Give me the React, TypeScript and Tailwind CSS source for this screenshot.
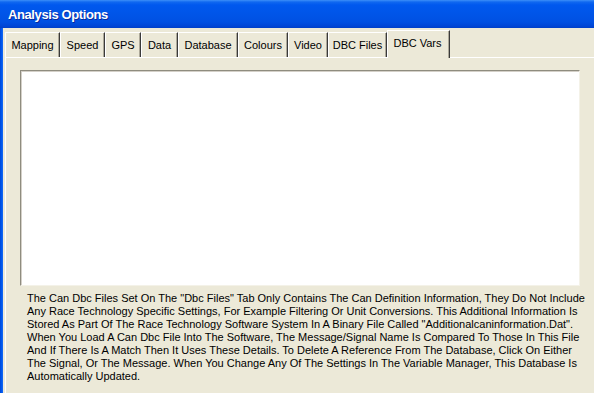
import React from 'react';

const tabs = [
  { label: 'Mapping', w: 'w-[55px]' },
  { label: 'Speed', w: 'w-[45px]' },
  { label: 'GPS', w: 'w-[36px]' },
  { label: 'Data', w: 'w-[37px]' },
  { label: 'Database', w: 'w-[60px]' },
  { label: 'Colours', w: 'w-[50px]' },
  { label: 'Video', w: 'w-[40px]' },
  { label: 'DBC Files', w: 'w-[59px]' },
];

const lines = [
  'The Can Dbc Files Set On The "Dbc Files" Tab Only Contains The Can Definition Information, They Do Not Include',
  'Any Race Technology Specific Settings, For Example Filtering Or Unit Conversions. This Additional Information Is',
  'Stored As Part Of The Race Technology Software System In A Binary File Called "Additionalcaninformation.Dat".',
  'When You Load A Can Dbc File Into The Software, The Message/Signal Name Is Compared To Those In This File',
  'And If There Is A Match Then It Uses These Details. To Delete A Reference From The Database, Click On Either',
  'The Signal, Or The Message. When You Change Any Of The Settings In The Variable Manager, This Database Is',
  'Automatically Updated.',
];

export default function App() {
  return (
    <div className="w-[594px] h-[393px] overflow-hidden flex flex-col bg-[#ECE9D8] font-['Liberation_Sans',Arial,sans-serif] text-black select-none">
      {/* title bar */}
      <div className="h-[28px] shrink-0 flex items-center pl-[8px] pt-[1px] bg-[linear-gradient(to_bottom,#3d8ff8_0px,#1068f0_2px,#0058ee_5px,#0055e8_14px,#0050e2_22px,#0046d6_26px,#003fc8_28px)]">
        <span className="text-white font-bold text-[13px] leading-none tracking-[-0.4px] [text-shadow:1px_1px_0_#0a2a9c]">
          Analysis Options
        </span>
      </div>

      <div className="flex flex-1 min-h-0">
        <div className="w-[3px] shrink-0 bg-[linear-gradient(to_right,#0046d6,#0058ee,#1a6af0)]" />

        <div className="flex-1 flex flex-col pl-[2px] pt-[1px]">
          {/* tab strip */}
          <div className="flex items-end h-[28px] relative z-10">
            {tabs.map((t) => (
              <div
                key={t.label}
                className={`${t.w} h-[25px] shrink-0 flex items-center justify-center pl-[2px] pr-[2px] text-[11px] border-l border-t border-white border-r border-r-[#3a3a3a] shadow-[inset_-1px_0_0_#aca899] rounded-tl-[1px]`}
              >
                {t.label}
              </div>
            ))}
            <div className="w-[63px] h-[28px] mb-[-1px] shrink-0 flex items-center justify-center pb-[3px] pr-[2px] text-[11px] bg-[#ECE9D8] border-l border-t border-white border-r border-r-[#3a3a3a] shadow-[inset_-1px_0_0_#aca899]">
              DBC Vars
            </div>
          </div>

          {/* tab page */}
          <div className="flex-1 border-t border-l border-white pl-[14px] pt-[12px]">
            <div className="w-[560px] h-[216px] bg-white border-t border-l border-[#8f8c7f] border-r border-b border-r-[#f4f2e8] border-b-[#f4f2e8] shadow-[inset_1px_1px_0_#d4d0c8]" />
            <p className="mt-[6px] pl-[7px] text-[11px] leading-[13px] whitespace-nowrap">
              {lines.map((l, i) => (
                <React.Fragment key={i}>
                  {l}
                  {i < lines.length - 1 && <br />}
                </React.Fragment>
              ))}
            </p>
          </div>
        </div>
      </div>
    </div>
  );
}
